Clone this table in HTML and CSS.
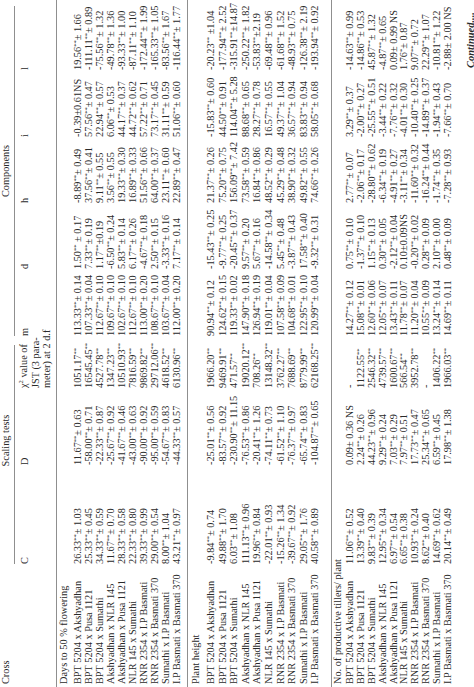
FILE: index.html
```html
<!DOCTYPE html>
<html>
<head>
<meta charset="utf-8">
<link rel="stylesheet" href="styles.css">
</head>
<body>
<div class="page">
<div class="sheet">
<table class="tbl">
<colgroup>
<col class="c-cross"><col class="c-c"><col class="c-d"><col class="c-chi"><col class="c-m"><col class="c-dd"><col class="c-h"><col class="c-i"><col class="c-l">
</colgroup>
<thead>
<tr class="h1">
<th>Cross</th>
<th colspan="3" class="grp"><div class="grp-in scal">Scaling tests</div></th>
<th colspan="5" class="grp"><div class="grp-in comp">Components</div></th>
</tr>
<tr class="h2">
<th></th>
<th class="lab">C</th>
<th class="lab">D</th>
<th class="chi">χ<sup class="sq">2</sup> value of<br>JST (3 para-<br>meter) at 2 d.f</th>
<th class="lab">m</th>
<th class="lab">d</th>
<th class="lab">h</th>
<th class="lab">i</th>
<th class="lab">l</th>
</tr>
</thead>
<tbody class="sec s1">
<tr class="label"><td colspan="9">Days to 50 % flowering</td></tr>
<tr><td>BPT 5204 x Akshyadhan</td><td>26.33<sup>**</sup>± 1.03</td><td>11.67<sup>**</sup>± 0.63</td><td>1051.17<sup>**</sup></td><td>113.33<sup>**</sup>± 0.14</td><td>1.50<sup>**</sup> ± 0.17</td><td>-8.89<sup>**</sup>± 0.49</td><td>-0.39±0.61NS</td><td>19.56<sup>**</sup>± 1.66</td></tr>
<tr><td>BPT 5204 x Pusa 1121</td><td>25.33<sup>**</sup>± 0.45</td><td>-58.00<sup>**</sup>± 0.71</td><td>16545.45<sup>**</sup></td><td>107.33<sup>**</sup>± 0.04</td><td>7.33<sup>**</sup>± 0.19</td><td>37.56<sup>**</sup>± 0.41</td><td>57.56<sup>**</sup>± 0.47</td><td>-111.11<sup>**</sup>± 0.89</td></tr>
<tr><td>BPT 5204 x Sumathi</td><td>34.33<sup>**</sup>± 0.59</td><td>-22.33<sup>**</sup>± 0.87</td><td>4527.78<sup>**</sup></td><td>112.67<sup>**</sup>± 0.10</td><td>1.17<sup>**</sup>±0.19</td><td>9.11<sup>**</sup>± 0.55</td><td>22.94<sup>**</sup>± 0.57</td><td>-75.56<sup>**</sup>± 1.32</td></tr>
<tr><td>Akshyadhan x NLR 145</td><td>11.67<sup>**</sup>± 0.70</td><td>-25.67<sup>**</sup>± 0.92</td><td>1347.23<sup>**</sup></td><td>109.67<sup>**</sup>± 0.10</td><td>-6.50<sup>**</sup>± 0.24</td><td>3.56<sup>**</sup>± 0.55</td><td>6.06<sup>**</sup>± 0.53</td><td>-49.78<sup>**</sup>± 1.36</td></tr>
<tr><td>Akshyadhan x Pusa 1121</td><td>28.33<sup>**</sup>± 0.58</td><td>-41.67<sup>**</sup>± 0.46</td><td>10510.93<sup>**</sup></td><td>102.67<sup>**</sup>± 0.10</td><td>5.83<sup>**</sup>± 0.14</td><td>19.33<sup>**</sup>± 0.30</td><td>44.17<sup>**</sup>± 0.37</td><td>-93.33<sup>**</sup>± 1.00</td></tr>
<tr><td>NLR 145 x Sumathi</td><td>22.33<sup>**</sup>± 0.80</td><td>-43.00<sup>**</sup>± 0.63</td><td>7816.59<sup>**</sup></td><td>112.67<sup>**</sup>± 0.10</td><td>6.17<sup>**</sup>± 0.26</td><td>16.89<sup>**</sup>± 0.33</td><td>44.72<sup>**</sup>± 0.62</td><td>-87.11<sup>**</sup>± 1.10</td></tr>
<tr><td>RNR 2354 x I.P Basmati</td><td>39.33<sup>**</sup>± 0.99</td><td>-90.00<sup>**</sup>± 0.92</td><td>9869.82<sup>**</sup></td><td>113.00<sup>**</sup>± 0.20</td><td>-4.67<sup>**</sup>± 0.18</td><td>51.56<sup>**</sup>± 0.66</td><td>57.22<sup>**</sup>± 0.71</td><td>-172.44<sup>**</sup>± 1.99</td></tr>
<tr><td>RNR 2354 x Basmati 370</td><td>29.00<sup>**</sup>± 0.54</td><td>-95.00<sup>**</sup>± 0.59</td><td>29712.06<sup>**</sup></td><td>108.67<sup>**</sup>± 0.10</td><td>2.50<sup>**</sup>± 0.15</td><td>64.00<sup>**</sup>± 0.37</td><td>73.17<sup>**</sup>± 0.45</td><td>-165.33<sup>**</sup>± 1.05</td></tr>
<tr><td>Sumathi x I.P Basmati</td><td>8.00<sup>**</sup>± 1.04</td><td>-54.67<sup>**</sup>± 0.83</td><td>4618.52<sup>**</sup></td><td>103.67<sup>**</sup>± 0.04</td><td>-3.33<sup>**</sup>± 0.16</td><td>23.11<sup>**</sup>± 0.60</td><td>31.11<sup>**</sup>± 0.59</td><td>-83.56<sup>**</sup>± 1.67</td></tr>
<tr class="last"><td>I.P Basmati x Basmati 370</td><td>43.21<sup>**</sup>± 0.97</td><td>-44.33<sup>**</sup>± 0.57</td><td>6130.96<sup>**</sup></td><td>112.00<sup>**</sup>± 0.20</td><td>7.17<sup>**</sup>± 0.14</td><td>22.89<sup>**</sup>± 0.47</td><td>51.06<sup>**</sup>± 0.60</td><td>-116.44<sup>**</sup>± 1.77</td></tr>
</tbody>
<tbody class="sec s2">
<tr class="label"><td colspan="9">Plant height</td></tr>
<tr><td>BPT 5204 x Akshyadhan</td><td>-9.84<sup>**</sup>± 0.74</td><td>-25.01<sup>**</sup>± 0.56</td><td>1966.20<sup>**</sup></td><td>90.94<sup>**</sup>± 0.12</td><td>-15.43<sup>**</sup>± 0.25</td><td>21.37<sup>**</sup>± 0.26</td><td>-15.83<sup>**</sup>± 0.60</td><td>-20.23<sup>**</sup> ±1.04</td></tr>
<tr><td>BPT 5204 x Pusa 1121</td><td>49.88<sup>**</sup>± 1.70</td><td>-83.57<sup>**</sup>± 0.92</td><td>9469.91<sup>**</sup></td><td>124.62<sup>**</sup>± 0.15</td><td>-9.77<sup>**</sup>± 0.25</td><td>75.20<sup>**</sup>± 0.75</td><td>44.50<sup>**</sup>± 0.91</td><td>-177.94<sup>**</sup>± 2.52</td></tr>
<tr><td>BPT 5204 x Sumathi</td><td>6.03<sup>**</sup>± 1.08</td><td>-230.90<sup>**</sup>± 11.15</td><td>471.57<sup>**</sup></td><td>119.33<sup>**</sup>± 0.02</td><td>-20.45<sup>**</sup>± 0.37</td><td>156.09<sup>**</sup>± 7.42</td><td>114.04<sup>**</sup>± 5.28</td><td>-315.91<sup>**</sup>±14.87</td></tr>
<tr><td>Akshyadhan x NLR 145</td><td>111.13<sup>**</sup>± 0.96</td><td>-76.53<sup>**</sup>± 0.86</td><td>19020.12<sup>**</sup></td><td>147.90<sup>**</sup>± 0.18</td><td>9.57<sup>**</sup>± 0.20</td><td>73.58<sup>**</sup>± 0.59</td><td>88.68<sup>**</sup>± 0.65</td><td>-250.22<sup>**</sup>± 1.82</td></tr>
<tr><td>Akshyadhan x Pusa 1121</td><td>19.96<sup>**</sup>± 0.84</td><td>-20.41<sup>**</sup>± 1.26</td><td>708.26<sup>**</sup></td><td>126.94<sup>**</sup>± 0.19</td><td>5.67<sup>**</sup>± 0.16</td><td>16.84<sup>**</sup>± 0.86</td><td>28.27<sup>**</sup>± 0.78</td><td>-53.83<sup>**</sup>±2.19</td></tr>
<tr><td>NLR 145 x Sumathi</td><td>-22.01<sup>**</sup>± 0.93</td><td>-74.11<sup>**</sup>± 0.73</td><td>13148.32<sup>**</sup></td><td>119.01<sup>**</sup>± 0.04</td><td>-14.58<sup>**</sup>± 0.34</td><td>48.52<sup>**</sup>± 0.29</td><td>16.57<sup>**</sup>± 0.55</td><td>-69.48<sup>**</sup>± 0.96</td></tr>
<tr><td>RNR 2354 x I.P Basmati</td><td>-15.26<sup>**</sup>± 1.34</td><td>-61.52<sup>**</sup>± 1.10</td><td>3762.27<sup>**</sup></td><td>107.58<sup>**</sup>± 0.09</td><td>5.45<sup>**</sup>± 0.48</td><td>45.29<sup>**</sup>± 0.48</td><td>49.37<sup>**</sup>± 1.04</td><td>-61.68<sup>**</sup>± 1.52</td></tr>
<tr><td>RNR 2354 x Basmati 370</td><td>-39.67<sup>**</sup>± 0.92</td><td>-76.37<sup>**</sup>± 0.97</td><td>7688.69<sup>**</sup></td><td>104.68<sup>**</sup>± 0.01</td><td>-3.87<sup>**</sup>± 0.43</td><td>38.90<sup>**</sup>± 0.32</td><td>36.57<sup>**</sup>± 0.94</td><td>-48.93<sup>**</sup>± 0.75</td></tr>
<tr><td>Sumathi x I.P Basmati</td><td>29.05<sup>**</sup>± 1.76</td><td>-65.74<sup>**</sup>± 0.83</td><td>8779.99<sup>**</sup></td><td>122.95<sup>**</sup>± 0.10</td><td>17.58<sup>**</sup>± 0.40</td><td>49.82<sup>**</sup>± 0.55</td><td>83.83<sup>**</sup>± 0.94</td><td>-126.38<sup>**</sup>± 2.19</td></tr>
<tr class="last"><td>I.P Basmati x Basmati 370</td><td>40.58<sup>**</sup>± 0.89</td><td>-104.87<sup>**</sup>± 0.65</td><td>62168.25<sup>**</sup></td><td>120.99<sup>**</sup>± 0.04</td><td>-9.32<sup>**</sup>± 0.31</td><td>74.66<sup>**</sup>± 0.26</td><td>58.05<sup>**</sup>± 0.68</td><td>-193.94<sup>**</sup>± 0.92</td></tr>
</tbody>
<tbody class="sec s3">
<tr class="label"><td colspan="9">No. of productive tillers/ plant</td></tr>
<tr><td>BPT 5204 x Akshyadhan</td><td>11.06<sup>**</sup>± 0.52</td><td>0.09± 0.36 NS</td><td>-</td><td>14.27<sup>**</sup>± 0.12</td><td>0.75<sup>**</sup>± 0.10</td><td>2.77<sup>**</sup>± 0.07</td><td>3.29<sup>**</sup>± 0.37</td><td>-14.63<sup>**</sup>± 0.99</td></tr>
<tr><td>BPT 5204 x Pusa 1121</td><td>13.39<sup>**</sup>± 0.40</td><td>2.24<sup>**</sup>± 0.26</td><td>1122.55<sup>**</sup></td><td>15.08<sup>**</sup>± 0.01</td><td>-1.37<sup>**</sup>± 0.10</td><td>-2.06<sup>**</sup>± 0.17</td><td>-2.00<sup>**</sup>± 0.27</td><td>-14.86<sup>**</sup>± 0.53</td></tr>
<tr><td>BPT 5204 x Sumathi</td><td>9.83<sup>**</sup>± 0.39</td><td>44.23<sup>**</sup>± 0.96</td><td>2546.32<sup>**</sup></td><td>12.60<sup>**</sup>± 0.06</td><td>1.15<sup>**</sup>± 0.13</td><td>-28.80<sup>**</sup>± 0.62</td><td>-25.55<sup>**</sup>± 0.51</td><td>45.87<sup>**</sup>± 1.32</td></tr>
<tr><td>Akshyadhan x NLR 145</td><td>12.95<sup>**</sup>± 0.34</td><td>9.29<sup>**</sup>± 0.24</td><td>4739.57<sup>**</sup></td><td>12.05<sup>**</sup>± 0.07</td><td>0.30<sup>**</sup>± 0.05</td><td>-6.34<sup>**</sup>± 0.19</td><td>-3.44<sup>**</sup>± 0.22</td><td>-4.87<sup>**</sup>± 0.65</td></tr>
<tr><td>Akshyadhan x Pusa 1121</td><td>6.97<sup>**</sup>± 0.54</td><td>7.03<sup>**</sup>± 0.29</td><td>1600.67<sup>**</sup></td><td>13.43<sup>**</sup>± 0.11</td><td>-2.12<sup>**</sup>± 0.04</td><td>-4.91<sup>**</sup>± 0.27</td><td>-7.76<sup>**</sup>± 0.32</td><td>0.09± 0.99 NS</td></tr>
<tr><td>NLR 145 x Sumathi</td><td>6.65<sup>**</sup>± 0.38</td><td>7.97<sup>**</sup>± 0.51</td><td>566.54<sup>**</sup></td><td>11.78<sup>**</sup>± 0.07</td><td>0.10±0.09NS</td><td>-3.11<sup>**</sup>± 0.34</td><td>-4.01<sup>**</sup>± 0.30</td><td>1.76<sup>*</sup>± 0.87</td></tr>
<tr><td>RNR 2354 x I.P Basmati</td><td>10.93<sup>**</sup>± 0.24</td><td>17.73<sup>**</sup>± 0.47</td><td>3952.78<sup>**</sup></td><td>11.20<sup>**</sup>± 0.04</td><td>-0.20<sup>**</sup>± 0.02</td><td>-11.60<sup>**</sup>± 0.32</td><td>-10.40<sup>**</sup>± 0.25</td><td>9.07<sup>**</sup>± 0.72</td></tr>
<tr><td>RNR 2354 x Basmati 370</td><td>8.62<sup>**</sup>± 0.40</td><td>25.34<sup>**</sup>± 0.65</td><td>-</td><td>10.55<sup>**</sup>± 0.09</td><td>0.28<sup>**</sup>± 0.09</td><td>-16.24<sup>**</sup>± 0.44</td><td>-14.89<sup>**</sup>± 0.37</td><td>22.29<sup>**</sup>± 1.07</td></tr>
<tr><td>Sumathi x I.P Basmati</td><td>14.69<sup>**</sup>± 0.62</td><td>6.59<sup>**</sup>± 0.45</td><td>1406.22<sup>**</sup></td><td>13.24<sup>**</sup>± 0.14</td><td>2.10<sup>**</sup>± 0.00</td><td>-1.74<sup>**</sup>± 0.35</td><td>-1.94<sup>**</sup>± 0.43</td><td>-10.81<sup>**</sup>± 1.22</td></tr>
<tr class="last"><td>I.P Basmati x Basmati 370</td><td>20.14<sup>**</sup>± 0.49</td><td>17.98<sup>**</sup>± 1.38</td><td>1966.03<sup>**</sup></td><td>14.69<sup>**</sup>± 0.11</td><td>0.48<sup>**</sup>± 0.09</td><td>-7.28<sup>**</sup>± 0.93</td><td>-7.66<sup>**</sup>± 0.70</td><td>-2.88± 2.00 NS</td></tr>
</tbody>
</table>
<p class="cont">Continued....</p>
</div>
</div>
</body>
</html>
```

FILE: styles.css
```css
html, body {
  margin: 0;
  padding: 0;
  background: #ffffff;
}

.page {
  width: 474px;
  height: 687px;
  overflow: hidden;
}

.sheet {
  width: 687px;
  height: 474px;
  transform-origin: 0 0;
  transform: rotate(-90deg) translateX(-100%);
  font-family: "Liberation Serif", "Times New Roman", serif;
  font-size: 10.3px;
  color: #2a2a2a;
}

.tbl {
  width: 687px;
  border-collapse: collapse;
  table-layout: fixed;
}

.c-cross { width: 120px; }
.c-c { width: 99px; }
.c-d { width: 77px; }
.c-chi { width: 52px; }
.c-m { width: 67px; }
.c-dd { width: 66px; }
.c-h { width: 66px; }
.c-i { width: 67px; }
.c-l { width: 73px; }

.tbl th,
.tbl td {
  padding: 0 0 0 3px;
  white-space: nowrap;
  text-align: left;
  font-weight: normal;
  vertical-align: top;
  line-height: 10.9px;
}

.tbl sup {
  font-size: 6.5px;
  line-height: 0;
  vertical-align: 3px;
}

.tbl sup.sq {
  font-size: 6.5px;
  vertical-align: 4px;
}

.h1 th {
  height: 15px;
  padding-top: 1px;
}

.grp {
  text-align: center;
}

.grp-in {
  border-bottom: 1px solid #8f8f8f;
  margin-right: 6px;
  padding-bottom: 2px;
  text-align: center;
}

.grp-in.scal {
  padding-left: 28px;
}

.h2 th {
  border-bottom: 1px solid #8f8f8f;
  padding-top: 2px;
  padding-bottom: 3px;
}

.h2 th.lab {
  padding-top: 4px;
}

.h2 th.chi {
  line-height: 11.5px;
}

.label td {
  padding-top: 2px;
  padding-bottom: 4px;
}

.sec tr.last td {
  padding-bottom: 5px;
}

.s2 .label td {
  border-top: 1px solid #8f8f8f;
  padding-top: 2px;
  padding-bottom: 3px;
}

.s2 td {
  line-height: 11.6px;
}

.s2 tr.last td {
  padding-bottom: 10px;
}

.s3 .label td {
  border-top: 1px solid #8f8f8f;
  padding-top: 1px;
  padding-bottom: 1px;
}

.cont {
  margin: 6px 12px 0 0;
  text-align: right;
  font-style: italic;
  font-weight: bold;
  font-size: 10.5px;
}
```
